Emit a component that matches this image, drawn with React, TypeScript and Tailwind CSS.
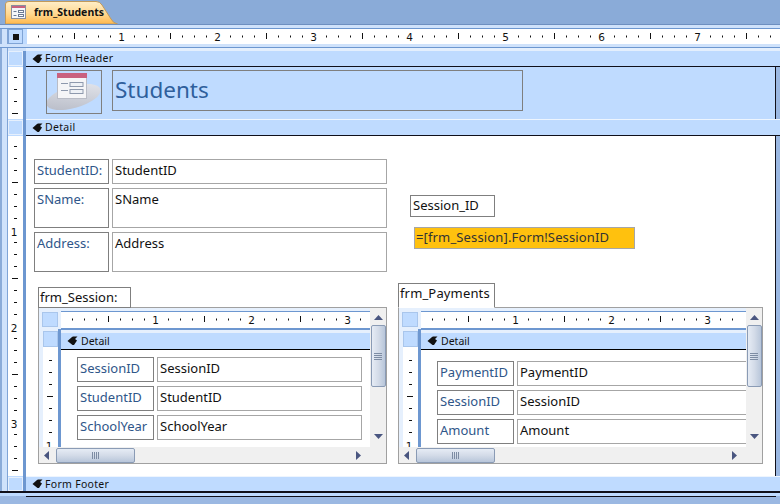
import React from "react";

const FONT = "font-['Noto_Sans',sans-serif]";

function range(n: number) {
  return Array.from({ length: n }, (_, i) => i);
}

function HRuler({ width, origin, count }: { width: number; origin: number; count: number }) {
  return (
    <svg width={width} height={15} className="block shrink-0 bg-white">
      {range(count).map((i) => {
        const k = i + 1;
        const x = origin + 12 * k;
        if (k % 8 === 0) {
          return (
            <text key={k} x={x - 0.5} y={11.5} fontSize={10.5} textAnchor="middle" fill="#111" fontFamily="'DejaVu Sans',sans-serif">
              {k / 8}
            </text>
          );
        }
        if (k % 4 === 0) return <rect key={k} x={x} y={4} width={1} height={6} fill="#111" />;
        return <rect key={k} x={x} y={6.5} width={1} height={2} fill="#111" />;
      })}
    </svg>
  );
}

function VRuler({ height, origin, count, cx, width, numberEvery = 8 }: { height: number; origin: number; count: number; cx: number; width: number; numberEvery?: number }) {
  return (
    <svg width={width} height={height} className="block shrink-0 bg-white">
      {range(count).map((i) => {
        const k = i + 1;
        const y = origin + 12 * k;
        if (k % numberEvery === 0) {
          return (
            <text key={k} x={cx - 1} y={y + 6} fontSize={10.5} textAnchor="middle" fill="#111" fontFamily="'DejaVu Sans',sans-serif">
              {k / numberEvery}
            </text>
          );
        }
        if (k % 4 === 0) return <rect key={k} x={cx - 3} y={y} width={6} height={1} fill="#111" />;
        return <rect key={k} x={cx - 1} y={y} width={3} height={1} fill="#111" />;
      })}
    </svg>
  );
}

function GripArrow() {
  return (
    <svg width={11} height={10} viewBox="0 0 11 10" className="shrink-0">
      <path d="M0.5 5 L5 1 L6 0.5 L10.5 0.5 L8 3 L10 4.5 L7 9 L5.5 9 Z" fill="#111" />
    </svg>
  );
}

function Arrow({ dir }: { dir: "up" | "down" | "left" | "right" }) {
  const d = {
    up: "M4.5 1 L9 6 L0 6 Z",
    down: "M0 1 L9 1 L4.5 6 Z",
    left: "M6 0 L6 9 L1 4.5 Z",
    right: "M1 0 L1 9 L6 4.5 Z",
  }[dir];
  return (
    <svg width={9} height={9} viewBox="0 0 9 9" className="block shrink-0">
      <path d={d} fill="#4a5680" />
    </svg>
  );
}

function SubForm({ rows, top, width, fieldW }: { rows: { label: string; field: string }[]; top: number; width: number; fieldW: number }) {
  const innerW = width - 18;
  return (
    <div className="flex flex-col h-[157px] border border-[#a0a0a0] bg-[#f0f0f0]" style={{ width }}>
      <div className="flex flex-1 min-h-0">
        <div className="flex flex-col overflow-hidden bg-[#e6f0fd]" style={{ width: innerW }}>
          <div className="flex h-[25px] shrink-0">
            <div className="w-[22px] shrink-0 pl-[3px] pt-[4px]">
              <div className="w-[16px] h-[15px] bg-[#bfdbff] border border-[#a9c6ec]" />
            </div>
            <div className="flex-1 min-w-0 flex flex-col">
              <div className="h-[3px] shrink-0" />
              <div className="h-px shrink-0 bg-[#6d97d0]" />
              <HRuler width={innerW - 22} origin={-1} count={26} />
              <div className="h-px shrink-0 bg-white" />
              <div className="h-[2px] shrink-0 bg-[#6d97d0]" />
              <div className="h-[3px] shrink-0" />
            </div>
          </div>
          <div className="flex flex-1 min-h-0">
            <div className="w-[19px] shrink-0 flex flex-col pl-[4px] -mt-[2px]">
              <div className="h-[16px] w-[15px] bg-[#bfdbff] border border-[#a9c6ec] shrink-0" />
              <VRuler width={15} height={100} origin={1} count={8} cx={7} numberEvery={8} />
            </div>
            <div className="w-[3px] -mt-[4px] bg-[#6d97d0] shrink-0" />
            <div className="flex-1 min-w-0 flex flex-col">
              <div className="h-[16px] bg-[#bfdbff] flex items-center gap-[3px] pl-[6px] shrink-0">
                <GripArrow />
                <span className={`${FONT} text-[10.5px] leading-none text-[#111]`}>Detail</span>
              </div>
              <div className="h-px bg-black shrink-0" />
              <div className="flex-1 bg-white flex flex-col gap-[4px] pl-[16px] overflow-hidden" style={{ paddingTop: top }}>
                {rows.map((r) => (
                  <div key={r.label} className="flex gap-[3px] shrink-0">
                    <div className={`${FONT} w-[77px] h-[25px] shrink-0 border border-[#7f7f7f] pl-[2px] text-[13px] leading-[21px] text-[#2f5689] whitespace-nowrap overflow-hidden`}>
                      {r.label}
                    </div>
                    <div className={`${FONT} h-[25px] shrink-0 border border-[#a6a6a6] pl-[2px] text-[13px] leading-[21px] text-[#111] whitespace-nowrap`} style={{ width: fieldW }}>
                      {r.field}
                    </div>
                  </div>
                ))}
              </div>
            </div>
          </div>
        </div>
        <div className="w-[16px] shrink-0 flex flex-col items-center pt-[6px] pb-[5px] bg-[#f0f0f0]">
          <Arrow dir="up" />
          <div className="w-[15px] h-[62px] mt-[2px] rounded-[2px] border border-[#8a9bb5] bg-gradient-to-r from-[#e6ecf5] via-[#d3dbe8] to-[#b8c6da] flex flex-col items-center justify-center gap-px">
            <div className="w-[8px] h-px bg-[#7d8ca3]" />
            <div className="w-[8px] h-px bg-[#7d8ca3]" />
            <div className="w-[8px] h-px bg-[#7d8ca3]" />
            <div className="w-[8px] h-px bg-[#7d8ca3]" />
          </div>
          <div className="flex-1" />
          <Arrow dir="down" />
        </div>
      </div>
      <div className="h-[16px] shrink-0 flex items-center pl-[4px] pr-[22px] bg-[#f0f0f0]">
        <Arrow dir="left" />
        <div className="w-[79px] h-[15px] ml-[4px] rounded-[2px] border border-[#8a9bb5] bg-gradient-to-b from-[#e6ecf5] via-[#d3dbe8] to-[#b8c6da] flex items-center justify-center gap-px">
          <div className="w-px h-[7px] bg-[#7d8ca3]" />
          <div className="w-px h-[7px] bg-[#7d8ca3]" />
          <div className="w-px h-[7px] bg-[#7d8ca3]" />
          <div className="w-px h-[7px] bg-[#7d8ca3]" />
        </div>
        <div className="flex-1" />
        <Arrow dir="right" />
      </div>
    </div>
  );
}

function Gutter() {
  return <div className="w-[8px] shrink-0 bg-[#cfe2fb] border-l-2 border-r border-l-[#8aabd8] border-r-[#7fa4d6]" />;
}

function SectionBar({ title, h = 15 }: { title: string; h?: number }) {
  return (
    <div className="flex shrink-0 bg-[#bfdbff]" style={{ height: h }}>
      <Gutter />
      <div className="w-[15px] shrink-0 bg-[#bfdbff] border border-[#e6f0fd]" />
      <div className="w-[3px] shrink-0 bg-[#6d97d0]" />
      <div className="flex-1 flex items-center gap-[3px] pl-[6px]">
        <GripArrow />
        <span className={`${FONT} -ml-px text-[10.5px] tracking-[0.3px] leading-none text-[#111]`}>{title}</span>
      </div>
    </div>
  );
}

function BlackRule() {
  return (
    <div className="flex h-px shrink-0">
      <Gutter />
      <div className="w-[15px] bg-[#bfdbff]" />
      <div className="w-[3px] bg-[#6d97d0]" />
      <div className="flex-1 bg-[#10101a]" />
    </div>
  );
}

function WhiteRule() {
  return (
    <div className="flex h-px shrink-0">
      <Gutter />
      <div className="w-[15px] bg-[#bfdbff]" />
      <div className="w-[3px] bg-[#6d97d0]" />
      <div className="flex-1 bg-[#eef5fe]" />
    </div>
  );
}

function LogoIcon() {
  return (
    <svg width={54} height={42} viewBox="0 0 54 42" className="block">
      <defs>
        <linearGradient id="logoEllipse" x1="1" y1="0" x2="0" y2="1">
          <stop offset="0" stopColor="#e6e8ee" />
          <stop offset="1" stopColor="#b4b8c4" />
        </linearGradient>
      </defs>
      <ellipse cx={26.5} cy={26} rx={28} ry={11} transform="rotate(-16 26.5 26)" fill="url(#logoEllipse)" />
      <rect x={10.5} y={2.5} width={29} height={25} fill="#f5f5f7" stroke="#b9bcc6" />
      <rect x={10} y={2} width={30} height={5} fill="#c9617f" />
      <rect x={23} y={11.5} width={13} height={4} fill="#eef1f6" stroke="#8e99ad" />
      <rect x={23} y={18.5} width={13} height={4} fill="#eef1f6" stroke="#8e99ad" />
      <rect x={14} y={12} width={7} height={1} fill="#8e99ad" />
      <rect x={14} y={19} width={7} height={1} fill="#8e99ad" />
    </svg>
  );
}

function FormTabIcon() {
  return (
    <svg width={15} height={14} viewBox="0 0 15 14" className="block shrink-0">
      <rect x={0.5} y={0.5} width={14} height={13} fill="#f4f6fa" stroke="#8a8f9c" />
      <rect x={1} y={1} width={13} height={2} fill="#c9617f" />
      <rect x={7.5} y={5.5} width={5} height={2} fill="#fff" stroke="#6b7a94" />
      <rect x={7.5} y={9.5} width={5} height={2} fill="#fff" stroke="#6b7a94" />
      <rect x={2.5} y={6} width={3} height={1} fill="#6b7a94" />
      <rect x={2.5} y={10} width={3} height={1} fill="#6b7a94" />
    </svg>
  );
}

const LABEL = `${FONT} absolute border border-[#7f7f7f] pl-[2px] text-[13px] leading-[21px] text-[#2f5689] whitespace-nowrap`;
const FIELD = `${FONT} absolute border border-[#a6a6a6] pl-[2px] text-[13px] leading-[21px] text-[#111] whitespace-nowrap`;

export default function App() {
  return (
    <div className="w-[780px] h-[504px] overflow-hidden flex flex-col bg-[#9bb8e2]">
      {/* tab strip */}
      <div className="h-[25px] shrink-0 bg-[#8aabd8] border-b border-[#6d8fc0] pl-[5px] flex items-end">
        <div className="relative w-[113px] h-[24px] flex items-center pl-[6px] gap-[8px]">
          <svg width={113} height={24} viewBox="0 0 113 24" className="absolute inset-0">
            <defs>
              <linearGradient id="tabFill" x1="0" y1="0" x2="0" y2="1">
                <stop offset="0" stopColor="#ffeec8" />
                <stop offset="0.55" stopColor="#ffd890" />
                <stop offset="1" stopColor="#ffb84d" />
              </linearGradient>
            </defs>
            <path d="M0.5 24 L0.5 4 Q0.5 1.5 4 1.5 L91 1.5 Q95 1.5 97 5 L106 19 Q108 23 112.5 24 Z" fill="url(#tabFill)" stroke="#c29a5a" />
          </svg>
          <div className="relative">
            <FormTabIcon />
          </div>
          <span className={`${FONT} relative text-[10.5px] font-bold leading-none text-[#111]`}>frm_Students</span>
        </div>
      </div>

      {/* ruler row */}
      <div className="h-[3px] shrink-0 bg-[#cfe2fb]" />
      <div className="h-px shrink-0 bg-[#6d97d0]" />
      <div className="flex h-[15px] shrink-0">
        <Gutter />
        <div className="w-[15px] bg-[#bfdbff] border border-[#7fa4d6] flex items-center justify-center shrink-0">
          <div className="w-[6px] h-[6px] bg-[#111]" />
        </div>
        <div className="w-[4px] bg-[#bfdbff] shrink-0" />
        <HRuler width={753} origin={-1} count={62} />
      </div>
      <div className="h-[3px] shrink-0 bg-[#cfe2fb]" />
      <div className="h-px shrink-0 bg-[#6d97d0]" />
      <div className="flex h-[3px] shrink-0">
        <Gutter />
        <div className="w-[18px] bg-[#cfe2fb]" />
        <div className="flex-1 bg-[#e4effd]" />
      </div>

      {/* form header */}
      <SectionBar title="Form Header" />
      <BlackRule />
      <div className="flex h-[52px] shrink-0">
        <Gutter />
        <VRuler width={15} height={52} origin={-2} count={4} cx={7} numberEvery={99} />
        <div className="w-[3px] shrink-0 bg-[#6d97d0]" />
        <div className="w-[749px] shrink-0 bg-[#bfdbff] relative">
          <div className="absolute left-[20px] top-[3px] w-[56px] h-[44px] border border-[#7f7f7f]">
            <LogoIcon />
          </div>
          <div className={`${FONT} absolute left-[86px] top-[3px] w-[411px] h-[41px] border border-[#7f7f7f] pl-[2px] text-[22.5px] leading-[38px] text-[#2f5f9c]`}>
            Students
          </div>
        </div>
        <div className="w-px shrink-0 bg-[#10101a]" />
        <div className="flex-1 bg-[#9bb8e2]" />
      </div>

      {/* detail */}
      <WhiteRule />
      <SectionBar title="Detail" />
      <BlackRule />
      <div className="flex h-[340px] shrink-0">
        <Gutter />
        <VRuler width={15} height={340} origin={-2} count={28} cx={7} />
        <div className="w-[3px] shrink-0 bg-[#6d97d0]" />
        <div className="w-[749px] shrink-0 bg-white relative">
          <div className={`${LABEL} left-[8px] top-[23px] w-[75px] h-[25px]`}>StudentID:</div>
          <div className={`${FIELD} left-[86px] top-[23px] w-[275px] h-[25px]`}>StudentID</div>
          <div className={`${LABEL} left-[8px] top-[52px] w-[75px] h-[40px]`}>SName:</div>
          <div className={`${FIELD} left-[86px] top-[52px] w-[275px] h-[40px]`}>SName</div>
          <div className={`${LABEL} left-[8px] top-[96px] w-[75px] h-[40px]`}>Address:</div>
          <div className={`${FIELD} left-[86px] top-[96px] w-[275px] h-[40px]`}>Address</div>

          <div className={`${FONT} absolute left-[384px] top-[59px] w-[85px] h-[22px] border border-[#7f7f7f] pl-[2px] text-[13px] leading-[18px] text-[#111]`}>Session_ID</div>
          <div className={`${FONT} absolute left-[388px] top-[91px] w-[221px] h-[22px] border border-[#a6a6a6] bg-[#ffc10e] pl-[1px] text-[13px] leading-[18px] tracking-[0.14px] text-[#333]`}>=[frm_Session].Form!SessionID</div>

          <div className={`${FONT} absolute z-10 left-[12px] top-[151px] w-[93px] h-[21px] border border-[#7f7f7f] bg-white pl-[1px] text-[13px] leading-[19px] text-[#111]`}>frm_Session:</div>
          <div className="absolute left-[12px] top-[171px]">
            <SubForm
              width={349}
              top={7}
              fieldW={205}
              rows={[
                { label: "SessionID", field: "SessionID" },
                { label: "StudentID", field: "StudentID" },
                { label: "SchoolYear", field: "SchoolYear" },
              ]}
            />
          </div>

          <div className={`${FONT} absolute z-10 left-[372px] top-[147px] w-[97px] h-[25px] border border-[#7f7f7f] border-b-white bg-white pl-[1px] text-[13px] leading-[18px] tracking-[0.15px] text-[#111]`}>frm_Payments</div>
          <div className="absolute left-[372px] top-[171px]">
            <SubForm
              width={365}
              top={11}
              fieldW={260}
              rows={[
                { label: "PaymentID", field: "PaymentID" },
                { label: "SessionID", field: "SessionID" },
                { label: "Amount", field: "Amount" },
              ]}
            />
          </div>
        </div>
        <div className="w-px shrink-0 bg-[#10101a]" />
        <div className="flex-1 bg-[#9bb8e2]" />
      </div>

      {/* footer */}
      <WhiteRule />
      <SectionBar title="Form Footer" h={14} />
      <div className="h-[2px] shrink-0 bg-[#10101a]" />
      <div className="h-[3px] shrink-0 bg-[#bfdbff]" />
      <div className="flex h-px shrink-0">
        <div className="w-[26px] bg-[#9bb8e2]" />
        <div className="w-[750px] bg-[#10101a]" />
      </div>
      <div className="flex-1 bg-[#9bb8e2]" />
    </div>
  );
}
